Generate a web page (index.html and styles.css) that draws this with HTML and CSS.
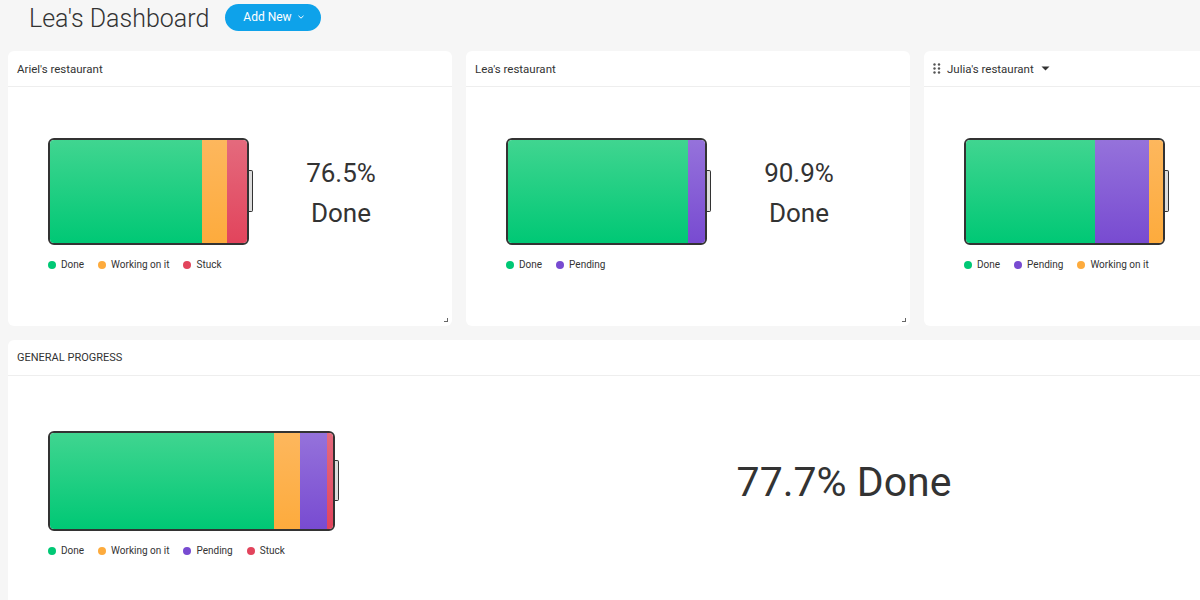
FILE: index.html
```html
<!DOCTYPE html>
<html lang="en">
<head>
    <meta charset="UTF-8">
    <title>Lea's Dashboard</title>
    <link rel="stylesheet" href="styles.css">
</head>
<body>
    <header class="top">
        <h1>Lea's Dashboard</h1>
        <button class="add-btn">Add New
            <svg width="8" height="6" viewBox="0 0 8 6"><path d="M1.5 1.8 L4 4.2 L6.5 1.8" fill="none" stroke="#fff" stroke-width="1"/></svg>
        </button>
    </header>

    <main class="board">
        <!-- Ariel -->
        <section class="card">
            <div class="card-head">Ariel's restaurant</div>
            <div class="card-body">
                <div class="chart">
                    <div class="battery">
                        <div class="cells">
                            <span class="seg done" style="width:77.4%"></span>
                            <span class="seg working" style="width:12.2%"></span>
                            <span class="seg stuck" style="width:10.4%"></span>
                        </div>
                        <div class="tip"></div>
                    </div>
                    <ul class="legend">
                        <li><i class="dot done"></i>Done</li>
                        <li><i class="dot working"></i>Working on it</li>
                        <li><i class="dot stuck"></i>Stuck</li>
                    </ul>
                </div>
                <div class="stat">76.5%<br>Done</div>
            </div>
            <i class="resize"></i>
        </section>

        <!-- Lea -->
        <section class="card">
            <div class="card-head">Lea's restaurant</div>
            <div class="card-body">
                <div class="chart">
                    <div class="battery">
                        <div class="cells">
                            <span class="seg done" style="width:91.6%"></span>
                            <span class="seg pending" style="width:8.4%"></span>
                        </div>
                        <div class="tip"></div>
                    </div>
                    <ul class="legend">
                        <li><i class="dot done"></i>Done</li>
                        <li><i class="dot pending"></i>Pending</li>
                    </ul>
                </div>
                <div class="stat">90.9%<br>Done</div>
            </div>
            <i class="resize"></i>
        </section>

        <!-- Julia -->
        <section class="card">
            <div class="card-head">
                <svg class="grip" width="8" height="11" viewBox="0 0 8 11">
                    <circle cx="1.5" cy="1.5" r="1.2"/><circle cx="6" cy="1.5" r="1.2"/>
                    <circle cx="1.5" cy="5.5" r="1.2"/><circle cx="6" cy="5.5" r="1.2"/>
                    <circle cx="1.5" cy="9.5" r="1.2"/><circle cx="6" cy="9.5" r="1.2"/>
                </svg>
                Julia's restaurant
                <svg class="caret" width="9" height="5" viewBox="0 0 9 5"><path d="M0.5 0.5 H8.5 L4.5 4.5 Z" fill="#333"/></svg>
            </div>
            <div class="card-body">
                <div class="chart">
                    <div class="battery">
                        <div class="cells">
                            <span class="seg done" style="width:65.5%"></span>
                            <span class="seg pending" style="width:27.5%"></span>
                            <span class="seg working" style="width:7%"></span>
                        </div>
                        <div class="tip"></div>
                    </div>
                    <ul class="legend">
                        <li><i class="dot done"></i>Done</li>
                        <li><i class="dot pending"></i>Pending</li>
                        <li><i class="dot working"></i>Working on it</li>
                    </ul>
                </div>
            </div>
        </section>

        <!-- General progress -->
        <section class="card wide">
            <div class="card-head caps">General progress</div>
            <div class="card-body">
                <div class="chart">
                    <div class="battery big">
                        <div class="cells">
                            <span class="seg done" style="width:79%"></span>
                            <span class="seg working" style="width:9.5%"></span>
                            <span class="seg pending" style="width:9.5%"></span>
                            <span class="seg stuck" style="width:2%"></span>
                        </div>
                        <div class="tip"></div>
                    </div>
                    <ul class="legend">
                        <li><i class="dot done"></i>Done</li>
                        <li><i class="dot working"></i>Working on it</li>
                        <li><i class="dot pending"></i>Pending</li>
                        <li><i class="dot stuck"></i>Stuck</li>
                    </ul>
                </div>
                <div class="stat big">77.7% Done</div>
            </div>
        </section>
    </main>
</body>
</html>
```

FILE: styles.css
```css
body {
    margin: 0;
    background: #f6f6f6;
    font-family: Roboto, "Liberation Sans", sans-serif;
    color: #333;
    overflow: hidden;
}
.top {
    display: flex;
    align-items: center;
    height: 36px;
    padding-left: 29px;
}
.top h1 {
    margin: 0 16px 0 0;
    font-size: 25px;
    font-weight: 300;
    color: #333;
}
.add-btn {
    display: flex;
    align-items: center;
    gap: 5px;
    height: 27px;
    padding: 0 16px 0 18px;
    border: none;
    border-radius: 14px;
    background: #0ea2ea;
    color: #fff;
    font-family: Roboto, "Liberation Sans", sans-serif;
    font-size: 12px;
    margin-top: -2px;
}
.board {
    display: grid;
    grid-template-columns: repeat(3, 444px);
    gap: 14px;
    width: 1360px;
    padding: 15px 0 0 8px;
}
.card {
    position: relative;
    background: #fff;
    border-radius: 6px;
    height: 275px;
}
.card.wide {
    grid-column: 1 / -1;
    height: 273px;
}
.card-head {
    display: flex;
    align-items: center;
    height: 35px;
    padding-left: 9px;
    font-size: 11.5px;
    border-bottom: 1px solid #eeeeee;
}
.card-head.caps {
    text-transform: uppercase;
    font-size: 11px;
}
.grip {
    fill: #555;
    margin-right: 6px;
}
.caret {
    margin-left: 7px;
}
.card-body {
    display: flex;
    align-items: center;
    height: 239px;
    padding-left: 40px;
}
.chart {
    width: 206px;
    margin-bottom: 5px;
}
.battery {
    display: flex;
    align-items: center;
}
.cells {
    display: flex;
    width: 197px;
    height: 103px;
    border: 2.5px solid #333;
    border-radius: 6px;
    overflow: hidden;
}
.seg {
    height: 100%;
}
.seg.done { background: linear-gradient(#40d590, #00c875); }
.seg.working { background: linear-gradient(#fdb75d, #fdab3d); }
.seg.pending { background: linear-gradient(#9572db, #784bd1); }
.seg.stuck { background: linear-gradient(#e46a7d, #e2445c); }
.tip {
    width: 2.5px;
    height: 40px;
    border: 1.5px solid #333;
    border-left: none;
    border-radius: 0 2px 2px 0;
    background: #ddd;
}
.legend {
    display: flex;
    gap: 14px;
    list-style: none;
    margin: 14px 0 0;
    padding: 0;
    font-size: 10px;
    line-height: 12px;
    white-space: nowrap;
}
.legend li {
    display: flex;
    align-items: center;
}
.dot {
    width: 8px;
    height: 8px;
    border-radius: 50%;
    margin-right: 5px;
}
.dot.done { background: #00c875; }
.dot.working { background: #fdab3d; }
.dot.pending { background: #784bd1; }
.dot.stuck { background: #e2445c; }
.stat {
    flex: 1;
    text-align: center;
    font-size: 26px;
    line-height: 40px;
    padding: 0 24px 28px 0;
}
.card.wide .chart {
    width: 292px;
    margin-bottom: 4px;
}
.card.wide .cells {
    width: 283px;
    height: 96px;
}
.card.wide .tip {
    height: 39px;
}
.stat.big {
    font-size: 41px;
    padding: 0 20px 28px 0;
}
.resize {
    position: absolute;
    right: 4px;
    bottom: 4px;
    width: 3px;
    height: 3px;
    border-right: 1.5px solid #666;
    border-bottom: 1.5px solid #666;
}
```
